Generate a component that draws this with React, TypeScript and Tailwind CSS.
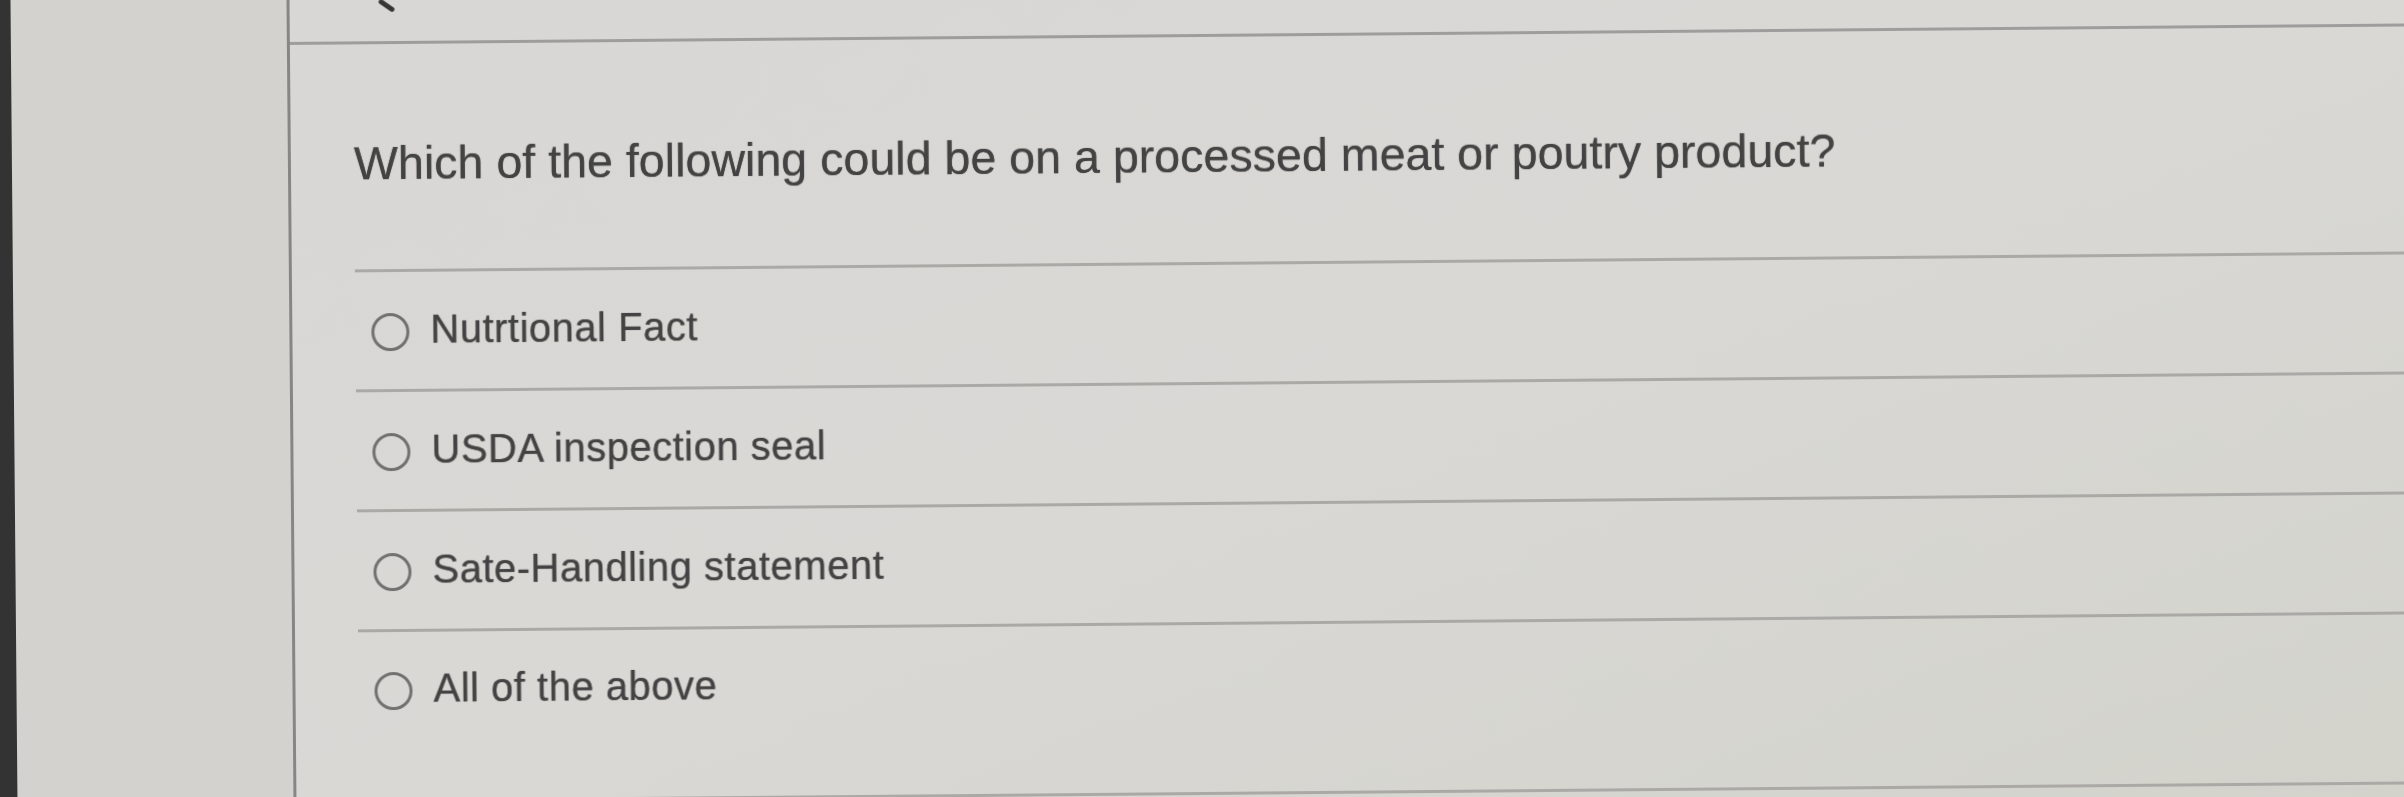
import React from "react";

const options = [
  "Nutrtional Fact",
  "USDA inspection seal",
  "Sate-Handling statement",
  "All of the above",
];

function Option({ label }: { label: string }) {
  return (
    <div className="flex items-center">
      <span className="ml-[16px] mt-[6px] h-[38px] w-[38px] shrink-0 rounded-full border-[3px] border-[#727170]" />
      <span className="ml-[21px] whitespace-nowrap text-[40px] leading-[40px] tracking-[0.5px] text-[#434343] [text-shadow:0_0_1px_#555]">
        {label}
      </span>
    </div>
  );
}

export default function App() {
  return (
    <div className="h-[797px] w-[2404px] overflow-hidden bg-[#d6d5d2] font-['Liberation_Sans',Arial,sans-serif]">
      <div className="-ml-[20px] -mt-[20px] flex h-[837px] w-[2444px] rotate-[-0.5deg] blur-[0.5px]">
        <div className="h-full w-[34px] shrink-0 bg-[#333333]" />
        <div className="h-full w-[279px] shrink-0 border-r-[3px] border-[#878685] bg-[#d3d2cf]" />
        <div className="flex h-full flex-1 flex-col bg-linear-to-br from-[#d8d7d5] via-[#d9d8d5] to-[#d3d3cc]">
          <div className="h-[57px] shrink-0 border-b-[3px] border-[#9f9d9c] pl-[88px] pt-[16px]">
            <div className="h-[5px] w-[18px] rotate-[35deg] rounded-full bg-[#363636]" />
          </div>
          <div className="pl-[63px]">
            <div className="pt-[96px] pb-[82px]">
              <div className="whitespace-nowrap text-[46.6px] leading-[47px] text-[#434343] [text-shadow:0_0_1px_#555]">
                Which of the following could be on a processed meat or poutry product?
              </div>
            </div>
            {options.slice(0, 3).map((o) => (
              <div
                key={o}
                className="flex h-[120px] items-center border-t-[3px] border-[#aaa9a6] pb-[4px]"
              >
                <Option label={o} />
              </div>
            ))}
            <div className="h-[173px] border-t-[3px] border-b-[3px] border-[#aaa9a6] pt-[34px]">
              <Option label={options[3]} />
            </div>
          </div>
        </div>
      </div>
    </div>
  );
}
